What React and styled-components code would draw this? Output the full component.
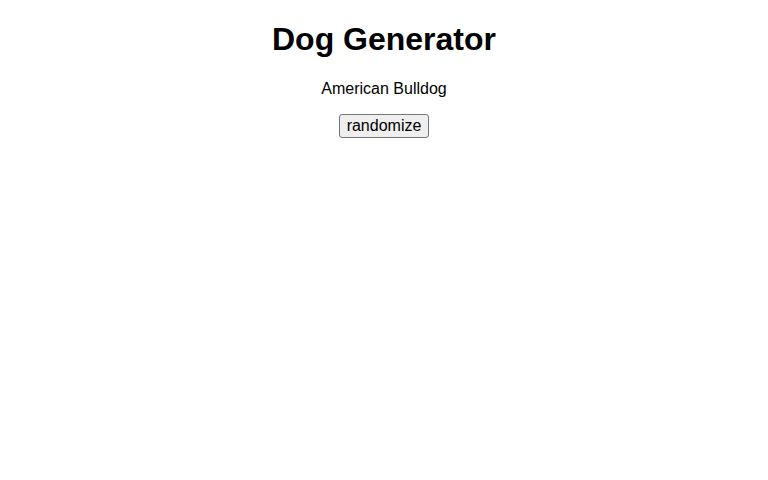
import React, { useState } from "react";
import styled, { createGlobalStyle } from "styled-components";

const GlobalStyle = createGlobalStyle`
  body {
    margin: 0;
    background: #ffffff;
    font-family: "Liberation Sans", Arial, sans-serif;
    color: #000000;
  }
`;

const Page = styled.div`
  text-align: center;
`;

const Title = styled.h1`
  font-size: 32px;
  font-weight: bold;
  margin: 21.44px 0;
`;

const Breed = styled.p`
  font-size: 16px;
  margin: 16px 0;
`;

const RandomButton = styled.button`
  font-family: "Liberation Sans", Arial, sans-serif;
  font-size: 16px;
  padding: 2px 7px;
  background: #efefef;
  color: #000;
  border: 1px solid #767676;
  border-radius: 3px;
`;

const breeds = ["American Bulldog", "Beagle", "Golden Retriever", "Shiba Inu", "Poodle"];

const App = () => {
  const [breed, setBreed] = useState(breeds[0]);

  const randomize = () => {
    setBreed(breeds[Math.floor(Math.random() * breeds.length)]);
  };

  return (
    <Page>
      <GlobalStyle />
      <Title>Dog Generator</Title>
      <Breed>{breed}</Breed>
      <RandomButton onClick={randomize}>randomize</RandomButton>
    </Page>
  );
};

export default App;
